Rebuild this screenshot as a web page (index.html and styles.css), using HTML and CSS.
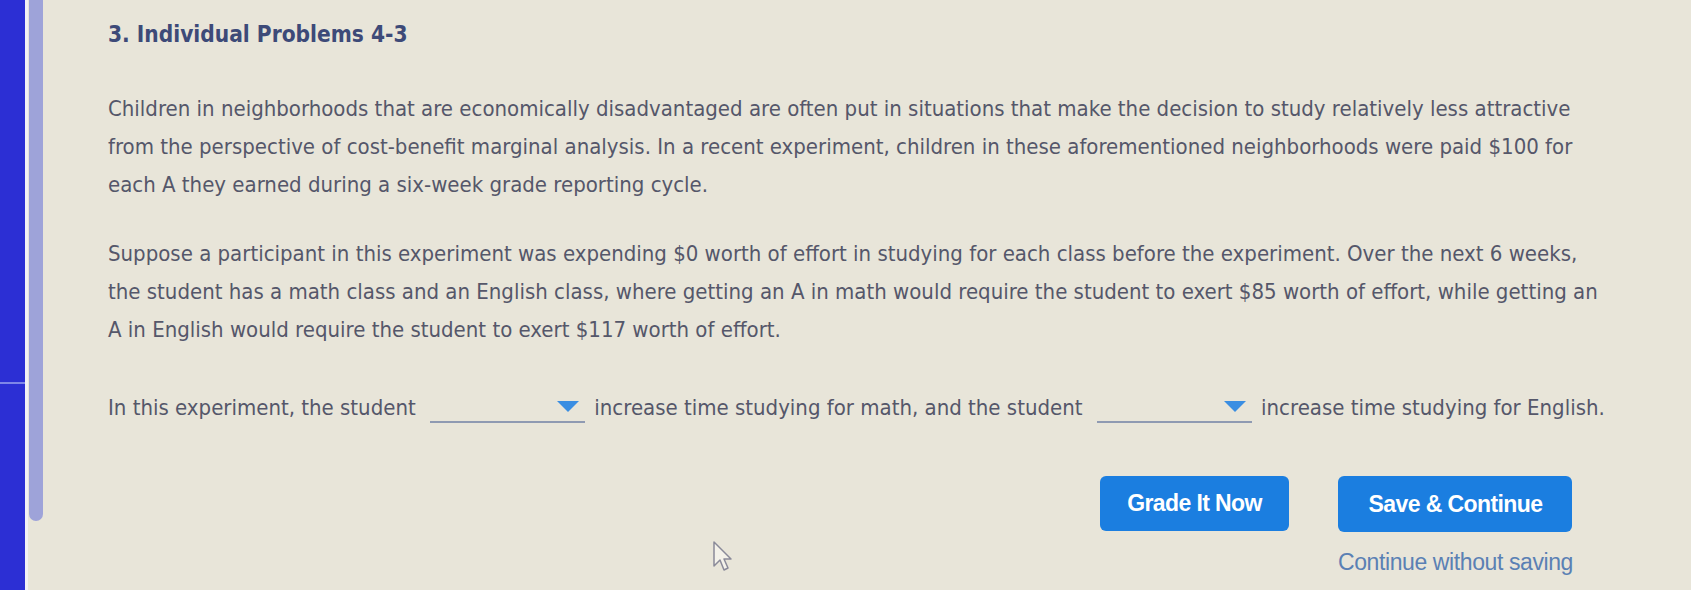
FILE: index.html
```html
<!DOCTYPE html>
<html lang="en">
<head>
  <meta charset="UTF-8">
  <title>Individual Problems 4-3</title>
  <link rel="stylesheet" href="styles.css">
</head>
<body>
  <div class="page">
    <div class="side">
      <div class="side-bar"><div class="side-line"></div></div>
      <div class="side-gap"></div>
      <div class="scroll"><div class="scroll-thumb"></div></div>
    </div>

    <div class="content">
      <h1 class="title">3. Individual Problems 4-3</h1>

      <p class="para">
        Children in neighborhoods that are economically disadvantaged are often put in situations that make the decision to study relatively less attractive<br>
        from the perspective of cost-benefit marginal analysis. In a recent experiment, children in these aforementioned neighborhoods were paid $100 for<br>
        each A they earned during a six-week grade reporting cycle.
      </p>

      <p class="para">
        Suppose a participant in this experiment was expending $0 worth of effort in studying for each class before the experiment. Over the next 6 weeks,<br>
        the student has a math class and an English class, where getting an A in math would require the student to exert $85 worth of effort, while getting an<br>
        A in English would require the student to exert $117 worth of effort.
      </p>

      <p class="question">
        In this experiment, the student
        <span class="dropdown"><span class="arrow"></span></span>
        increase time studying for math, and the student
        <span class="dropdown"><span class="arrow"></span></span>
        increase time studying for English.
      </p>

      <div class="actions">
        <button class="btn">Grade It Now</button>
        <div class="save-group">
          <button class="btn btn-wide">Save &amp; Continue</button>
          <a class="link" href="#">Continue without saving</a>
        </div>
      </div>
    </div>
  </div>

  <!-- mouse pointer -->
  <svg class="cursor" width="20" height="32" viewBox="0 0 20 32">
    <path d="M2 2 L2 26 L8 20 L12 30 L16 28 L12 19 L19 19 Z" fill="#f4f2ea" stroke="#8a8a99" stroke-width="1.5" stroke-linejoin="round"/>
  </svg>
</body>
</html>
```

FILE: styles.css
```css
body {
  margin: 0;
  background-color: #e8e5d9;
  font-family: "DejaVu Sans", sans-serif;
  font-stretch: condensed;
  color: #55576a;
  width: 1691px;
  height: 590px;
  overflow: hidden;
}

.page {
  display: flex;
  height: 590px;
}

.side {
  display: flex;
  width: 48px;
  flex-shrink: 0;
}

.side-bar {
  width: 26px;
  background-color: #2c2fd4;
  display: flex;
  flex-direction: column;
}

.side-line {
  margin-top: 382px;
  height: 2px;
  background-color: #7f86e8;
}

.side-gap {
  width: 3px;
  background-color: #f3f1f6;
}

.scroll {
  width: 19px;
  padding-left: 1px;
}

.scroll-thumb {
  width: 14px;
  height: 521px;
  background-color: #9ea3d9;
  border-radius: 0 0 7px 7px;
}

.content {
  flex: 1;
  padding-left: 60px;
  padding-top: 20px;
  display: flex;
  flex-direction: column;
  white-space: nowrap;
}

.title {
  margin: 0;
  font-size: 22.5px;
  line-height: 28px;
  font-weight: bold;
  color: #3d4a78;
}

.para {
  margin: 42px 0 0 0;
  font-size: 22px;
  line-height: 38px;
}

.para + .para {
  margin-top: 31px;
}

.question {
  margin: 40px 0 0 0;
  font-size: 22px;
  line-height: 38px;
}

.dropdown {
  display: inline-block;
  position: relative;
  width: 155px;
  height: 24px;
  border-bottom: 2px solid #8f9ab2;
  vertical-align: -8px;
  margin: 0 3px 0 8px;
}

.arrow {
  position: absolute;
  right: 6px;
  top: 4px;
  width: 0;
  height: 0;
  border-left: 11px solid transparent;
  border-right: 11px solid transparent;
  border-top: 11px solid #3a8ee2;
}

.actions {
  display: flex;
  justify-content: flex-end;
  align-items: flex-start;
  gap: 49px;
  margin-top: 49px;
  padding-right: 118px;
}

.save-group {
  display: flex;
  flex-direction: column;
  align-items: center;
  gap: 17px;
}

.btn {
  width: 189px;
  height: 55px;
  background-color: #1b7ee0;
  color: white;
  border: none;
  border-radius: 6px;
  font-family: "Liberation Sans", Arial, sans-serif;
  font-size: 23px;
  font-weight: bold;
  letter-spacing: -0.6px;
}

.btn-wide {
  width: 234px;
  height: 56px;
}

.link {
  font-family: "Liberation Sans", Arial, sans-serif;
  font-size: 23px;
  letter-spacing: -0.4px;
  color: #5a80b4;
  text-decoration: none;
}

.cursor {
  position: absolute;
  left: 712px;
  top: 540px;
}
```
